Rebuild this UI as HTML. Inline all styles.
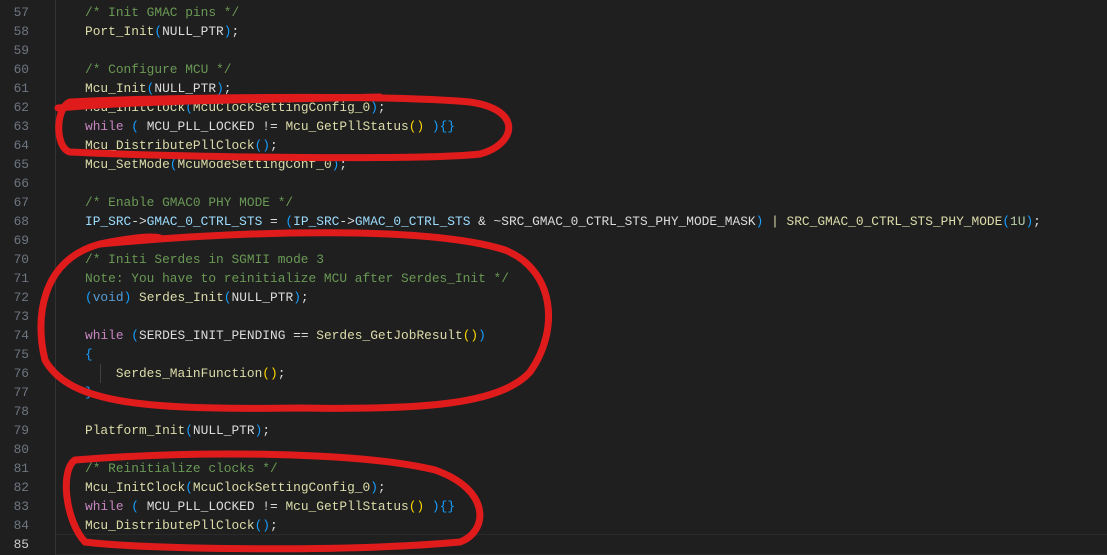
<!DOCTYPE html>
<html><head><meta charset="utf-8"><style>
body{margin:0;width:1107px;height:555px;background:#1f1f1f;overflow:hidden;position:relative;font-family:"Liberation Mono",monospace;font-size:12.85px;}
.l{position:absolute;left:0;height:19px;line-height:19px;white-space:pre;width:1107px}
.n{position:absolute;left:0;width:29px;text-align:right;color:#6e7681}
.c{position:absolute;left:85px;color:#dcdcdc}
.cm{color:#6a9955}.f{color:#dcdcaa}.k{color:#c586c0}.b{color:#179fff}.y{color:#ffd700}.v{color:#9cdcfe}.t{color:#569cd6}.num{color:#b5cea8}
.gut{position:absolute;left:55px;top:0;width:1px;height:555px;background:#333}
</style></head><body>
<div class="gut"></div>
<div style="position:absolute;left:56px;top:534px;width:1051px;height:19px;border-top:1px solid #2a2a2a;border-bottom:1px solid #2a2a2a"></div>
<div style="position:absolute;left:100px;top:364px;width:1px;height:19px;background:#404040"></div>
<div class="l" style="top:3px"><span class="n">57</span><span class="c"><span class="cm">/* Init GMAC pins */</span></span></div>
<div class="l" style="top:22px"><span class="n">58</span><span class="c"><span class="f">Port_Init</span><span class="b">(</span>NULL_PTR<span class="b">)</span>;</span></div>
<div class="l" style="top:41px"><span class="n">59</span></div>
<div class="l" style="top:60px"><span class="n">60</span><span class="c"><span class="cm">/* Configure MCU */</span></span></div>
<div class="l" style="top:79px"><span class="n">61</span><span class="c"><span class="f">Mcu_Init</span><span class="b">(</span>NULL_PTR<span class="b">)</span>;</span></div>
<div class="l" style="top:98px"><span class="n">62</span><span class="c"><span class="f">Mcu_InitClock</span><span class="b">(</span><span class="f">McuClockSettingConfig_0</span><span class="b">)</span>;</span></div>
<div class="l" style="top:117px"><span class="n">63</span><span class="c"><span class="k">while</span> <span class="b">(</span> MCU_PLL_LOCKED != <span class="f">Mcu_GetPllStatus</span><span class="y">()</span> <span class="b">){}</span></span></div>
<div class="l" style="top:136px"><span class="n">64</span><span class="c"><span class="f">Mcu_DistributePllClock</span><span class="b">()</span>;</span></div>
<div class="l" style="top:155px"><span class="n">65</span><span class="c"><span class="f">Mcu_SetMode</span><span class="b">(</span><span class="f">McuModeSettingConf_0</span><span class="b">)</span>;</span></div>
<div class="l" style="top:174px"><span class="n">66</span></div>
<div class="l" style="top:193px"><span class="n">67</span><span class="c"><span class="cm">/* Enable GMAC0 PHY MODE */</span></span></div>
<div class="l" style="top:212px"><span class="n">68</span><span class="c"><span class="v">IP_SRC</span>-&gt;<span class="v">GMAC_0_CTRL_STS</span> = <span class="b">(</span><span class="v">IP_SRC</span>-&gt;<span class="v">GMAC_0_CTRL_STS</span> &amp; ~SRC_GMAC_0_CTRL_STS_PHY_MODE_MASK<span class="b">)</span> <span class="f">|</span> <span class="f">SRC_GMAC_0_CTRL_STS_PHY_MODE</span><span class="b">(</span><span class="num">1U</span><span class="b">)</span>;</span></div>
<div class="l" style="top:231px"><span class="n">69</span></div>
<div class="l" style="top:250px"><span class="n">70</span><span class="c"><span class="cm">/* Initi Serdes in SGMII mode 3</span></span></div>
<div class="l" style="top:269px"><span class="n">71</span><span class="c"><span class="cm">Note: You have to reinitialize MCU after Serdes_Init */</span></span></div>
<div class="l" style="top:288px"><span class="n">72</span><span class="c"><span class="b">(</span><span class="t">void</span><span class="b">)</span> <span class="f">Serdes_Init</span><span class="b">(</span>NULL_PTR<span class="b">)</span>;</span></div>
<div class="l" style="top:307px"><span class="n">73</span></div>
<div class="l" style="top:326px"><span class="n">74</span><span class="c"><span class="k">while</span> <span class="b">(</span>SERDES_INIT_PENDING == <span class="f">Serdes_GetJobResult</span><span class="y">()</span><span class="b">)</span></span></div>
<div class="l" style="top:345px"><span class="n">75</span><span class="c"><span class="b">{</span></span></div>
<div class="l" style="top:364px"><span class="n">76</span><span class="c">    <span class="f">Serdes_MainFunction</span><span class="y">()</span>;</span></div>
<div class="l" style="top:383px"><span class="n">77</span><span class="c"><span class="b">}</span></span></div>
<div class="l" style="top:402px"><span class="n">78</span></div>
<div class="l" style="top:421px"><span class="n">79</span><span class="c"><span class="f">Platform_Init</span><span class="b">(</span>NULL_PTR<span class="b">)</span>;</span></div>
<div class="l" style="top:440px"><span class="n">80</span></div>
<div class="l" style="top:459px"><span class="n">81</span><span class="c"><span class="cm">/* Reinitialize clocks */</span></span></div>
<div class="l" style="top:478px"><span class="n">82</span><span class="c"><span class="f">Mcu_InitClock</span><span class="b">(</span><span class="f">McuClockSettingConfig_0</span><span class="b">)</span>;</span></div>
<div class="l" style="top:497px"><span class="n">83</span><span class="c"><span class="k">while</span> <span class="b">(</span> MCU_PLL_LOCKED != <span class="f">Mcu_GetPllStatus</span><span class="y">()</span> <span class="b">){}</span></span></div>
<div class="l" style="top:516px"><span class="n">84</span><span class="c"><span class="f">Mcu_DistributePllClock</span><span class="b">()</span>;</span></div>
<div class="l" style="top:535px"><span class="n" style="color:#cccccc">85</span></div>
<svg width="1107" height="555" style="position:absolute;left:0;top:0" fill="none" stroke="#e01b1b" stroke-width="7" stroke-linecap="round">
<path d="M70 102 C150 98 380 94 470 102 C525 110 515 145 480 154 C430 160 200 158 70 152 C55 148 55 108 70 102"/>
<path d="M58 108 C150 100 250 100 380 97"/>
<path d="M100 244 C250 230 430 226 505 250 C555 270 560 330 530 372 C500 405 420 410 300 408 C150 410 70 405 45 360 C35 320 40 260 100 244 C120 240 150 235 160 238"/>
<path d="M75 460 C200 450 360 452 435 470 C492 490 488 532 460 542 C350 552 150 550 85 542 C65 520 60 470 75 460"/>
</svg>
</body></html>
